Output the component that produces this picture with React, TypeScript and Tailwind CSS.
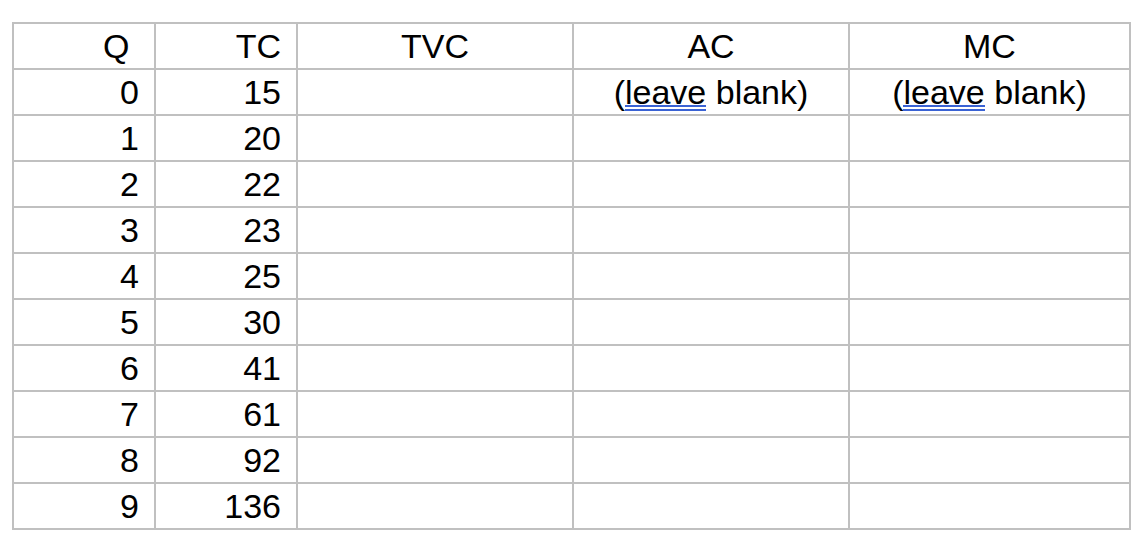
import React from "react";

const rows: [number, number][] = [
	[0, 15],
	[1, 20],
	[2, 22],
	[3, 23],
	[4, 25],
	[5, 30],
	[6, 41],
	[7, 61],
	[8, 92],
	[9, 136],
];

const cell = "border-2 border-[#c0c0c0] h-[46px] p-0 leading-none";

// spell-check style double underline under "leave"
const LeaveBlank = () => (
	<span>
		(
		<span className="relative">
			leave
			<span className="absolute left-0 right-0 top-[32px] h-[1.5px] bg-[#3a62d4]" />
			<span className="absolute left-0 right-0 top-[36px] h-[1.5px] bg-[#3a62d4]" />
		</span>{" "}
		blank)
	</span>
);

const App = () => {
	return (
		<div className="w-[1146px] h-[546px] bg-white pt-[22px] pl-[12px] font-['Liberation_Sans',Arial,sans-serif] text-[34px] text-black">
			<table className="border-collapse table-fixed w-[1117px]">
				<colgroup>
					<col className="w-[142px]" />
					<col className="w-[142px]" />
					<col className="w-[276px]" />
					<col className="w-[276px]" />
					<col className="w-[281px]" />
				</colgroup>
				<tbody>
					{/* header */}
					<tr>
						<td className={`${cell} text-right pr-[15px]`}>Q&nbsp;</td>
						<td className={`${cell} text-right pr-[15px]`}>TC</td>
						<td className={`${cell} text-center`}>TVC</td>
						<td className={`${cell} text-center`}>AC</td>
						<td className={`${cell} text-center`}>MC</td>
					</tr>
					{rows.map(([q, tc]) => (
						<tr key={q}>
							<td className={`${cell} text-right pr-[15px]`}>{q}</td>
							<td className={`${cell} text-right pr-[15px]`}>{tc}</td>
							<td className={cell}></td>
							<td className={`${cell} text-center`}>
								{q === 0 && <LeaveBlank />}
							</td>
							<td className={`${cell} text-center`}>
								{q === 0 && <LeaveBlank />}
							</td>
						</tr>
					))}
				</tbody>
			</table>
		</div>
	);
};

export default App;
